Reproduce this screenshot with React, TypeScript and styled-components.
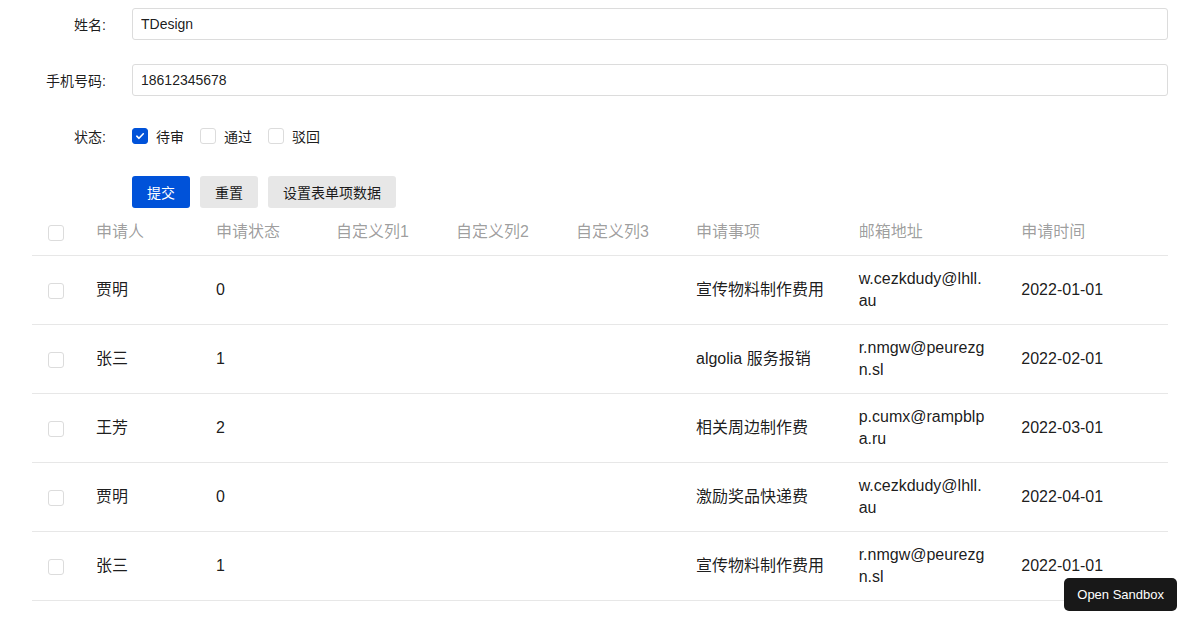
import * as React from 'react';
import styled, { createGlobalStyle } from 'styled-components';

const GlobalStyle = createGlobalStyle`
    body {
        margin: 0;
        background: #fff;
        font-family: "Liberation Sans", Arial, "Noto Sans CJK SC", sans-serif;
        color: rgba(0, 0, 0, 0.9);
    }
`;

const Page = styled.div`
    padding: 8px 32px 0;
`;

const Form = styled.form`
    display: flex;
    flex-direction: column;
    gap: 24px;
`;

const FormRow = styled.div`
    display: flex;
    align-items: center;
    height: 32px;
`;

const Label = styled.label`
    width: 100px;
    padding-right: 26px;
    box-sizing: border-box;
    text-align: right;
    font-size: 14px;
    flex-shrink: 0;
`;

const Control = styled.div`
    flex: 1;
    display: flex;
    align-items: center;
    gap: 10px;
`;

const Input = styled.input`
    flex: 1;
    height: 32px;
    box-sizing: border-box;
    border: 1px solid #dcdcdc;
    border-radius: 3px;
    padding: 0 8px;
    font-size: 14px;
    font-family: inherit;
    color: rgba(0, 0, 0, 0.9);
    outline: none;
`;

const Box = styled.span<{ $checked?: boolean }>`
    width: 16px;
    height: 16px;
    box-sizing: border-box;
    border-radius: 3px;
    border: 1px solid ${p => (p.$checked ? '#0052d9' : '#dcdcdc')};
    background: ${p => (p.$checked ? '#0052d9' : '#fff')};
    display: inline-flex;
    align-items: center;
    justify-content: center;
    vertical-align: middle;
    flex-shrink: 0;
`;

const CheckItem = styled.label`
    display: inline-flex;
    align-items: center;
    gap: 8px;
    font-size: 14px;
    margin-right: 6px;
`;

const Button = styled.button<{ $primary?: boolean }>`
    height: 32px;
    padding: 0 15px;
    border: none;
    border-radius: 3px;
    font-size: 14px;
    font-family: inherit;
    cursor: pointer;
    background: ${p => (p.$primary ? '#0052d9' : '#e7e7e7')};
    color: ${p => (p.$primary ? '#fff' : 'rgba(0, 0, 0, 0.9)')};
`;

const Table = styled.table`
    width: 100%;
    border-collapse: collapse;
    table-layout: fixed;
    font-size: 16px;
    line-height: 22px;
`;

const Th = styled.th<{ $w?: number }>`
    width: ${p => (p.$w ? `${p.$w}px` : 'auto')};
    padding: 13px 16px 12px;
    text-align: left;
    font-weight: normal;
    color: rgba(0, 0, 0, 0.4);
    border-bottom: 1px solid #e7e7e7;
    vertical-align: middle;
    white-space: nowrap;
`;

const Td = styled.td`
    padding: 12px 16px;
    border-bottom: 1px solid #e7e7e7;
    vertical-align: middle;
    word-break: break-all;
`;

const SandboxButton = styled.button`
    position: fixed;
    right: 23px;
    bottom: 19px;
    height: 33px;
    padding: 0 13px;
    background: #181818;
    color: #fff;
    border: none;
    border-radius: 5px;
    font-size: 13px;
    font-family: "Liberation Sans", Arial, sans-serif;
`;

const Check = ({ checked }: { checked?: boolean }) => (
    <Box $checked={checked}>
        {checked && (
            <svg width="10" height="10" viewBox="0 0 10 10">
                <path d="M1.8 5.2 L4 7.3 L8.3 2.8" stroke="#fff" strokeWidth="1.6" fill="none" strokeLinecap="round" strokeLinejoin="round" />
            </svg>
        )}
    </Box>
);

const rows = [
    { applicant: '贾明', status: 0, matters: '宣传物料制作费用', email: 'w.cezkdudy@lhll.au', time: '2022-01-01' },
    { applicant: '张三', status: 1, matters: 'algolia 服务报销', email: 'r.nmgw@peurezgn.sl', time: '2022-02-01' },
    { applicant: '王芳', status: 2, matters: '相关周边制作费', email: 'p.cumx@rampblpa.ru', time: '2022-03-01' },
    { applicant: '贾明', status: 0, matters: '激励奖品快递费', email: 'w.cezkdudy@lhll.au', time: '2022-04-01' },
    { applicant: '张三', status: 1, matters: '宣传物料制作费用', email: 'r.nmgw@peurezgn.sl', time: '2022-01-01' },
];

export default function App() {
    return (
        <Page>
            <GlobalStyle />
            <Form onSubmit={e => e.preventDefault()}>
                <FormRow>
                    <Label>姓名:</Label>
                    <Control>
                        <Input defaultValue="TDesign" />
                    </Control>
                </FormRow>
                <FormRow>
                    <Label>手机号码:</Label>
                    <Control>
                        <Input defaultValue="18612345678" />
                    </Control>
                </FormRow>
                <FormRow>
                    <Label>状态:</Label>
                    <Control>
                        <CheckItem><Check checked />待审</CheckItem>
                        <CheckItem><Check />通过</CheckItem>
                        <CheckItem><Check />驳回</CheckItem>
                    </Control>
                </FormRow>
                <FormRow>
                    <Label />
                    <Control>
                        <Button $primary type="submit">提交</Button>
                        <Button type="reset">重置</Button>
                        <Button type="button">设置表单项数据</Button>
                    </Control>
                </FormRow>
            </Form>
            <Table>
                <thead>
                    <tr>
                        <Th $w={16}><Check /></Th>
                        <Th $w={88}>申请人</Th>
                        <Th $w={88}>申请状态</Th>
                        <Th $w={88}>自定义列1</Th>
                        <Th $w={88}>自定义列2</Th>
                        <Th $w={88}>自定义列3</Th>
                        <Th>申请事项</Th>
                        <Th>邮箱地址</Th>
                        <Th>申请时间</Th>
                    </tr>
                </thead>
                <tbody>
                    {rows.map((r, i) => (
                        <tr key={i}>
                            <Td><Check /></Td>
                            <Td>{r.applicant}</Td>
                            <Td>{r.status}</Td>
                            <Td />
                            <Td />
                            <Td />
                            <Td>{r.matters}</Td>
                            <Td>{r.email}</Td>
                            <Td>{r.time}</Td>
                        </tr>
                    ))}
                </tbody>
            </Table>
            <SandboxButton>Open Sandbox</SandboxButton>
        </Page>
    );
}
